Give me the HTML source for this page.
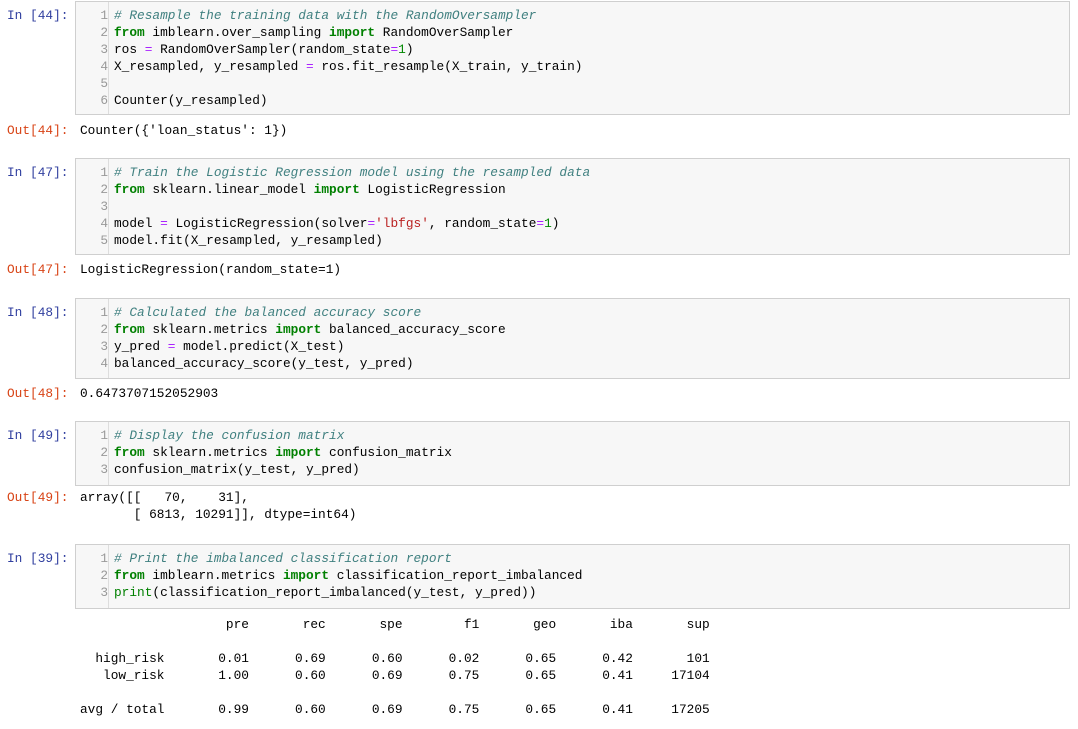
<!DOCTYPE html>
<html><head><meta charset="utf-8"><style>
body{margin:0;background:#fff;width:1078px;height:729px;position:relative;overflow:hidden;font-family:"Liberation Mono",monospace;font-size:12.8px;color:#000}
.p{position:absolute;left:7px;white-space:pre;line-height:17px}
.in{color:#303f9f}.out{color:#d84315}
.box{position:absolute;left:75px;width:993px;background:#f7f7f7;border:1px solid #cfcfcf}
.g{position:absolute;left:0;top:0;bottom:0;width:32px;border-right:1px solid #ddd;text-align:right;color:#999;padding-top:5px;line-height:17px;white-space:pre}
.c{position:absolute;left:38px;top:5px;line-height:17px;white-space:pre}
.o{position:absolute;left:80px;white-space:pre;line-height:17px}
.k{color:#008000;font-weight:bold}.cm{color:#408080;font-style:italic}.e{color:#aa22ff}.s{color:#ba2121}.n{color:#080}.b{color:#008000}
</style></head><body>

<div class="p in" style="top:7px">In [44]:</div>
<div class="box" style="top:1px;height:112px"><div class="g">1
2
3
4
5
6</div><div class="c"><span class="cm"># Resample the training data with the RandomOversampler</span>
<span class="k">from</span> imblearn.over_sampling <span class="k">import</span> RandomOverSampler
ros <span class="e">=</span> RandomOverSampler(random_state<span class="e">=</span><span class="n">1</span>)
X_resampled, y_resampled <span class="e">=</span> ros.fit_resample(X_train, y_train)

Counter(y_resampled)</div></div>
<div class="p out" style="top:122px">Out[44]:</div>
<div class="o" style="top:122px">Counter({'loan_status': 1})</div>

<div class="p in" style="top:164px">In [47]:</div>
<div class="box" style="top:158px;height:95px"><div class="g">1
2
3
4
5</div><div class="c"><span class="cm"># Train the Logistic Regression model using the resampled data</span>
<span class="k">from</span> sklearn.linear_model <span class="k">import</span> LogisticRegression

model <span class="e">=</span> LogisticRegression(solver<span class="e">=</span><span class="s">'lbfgs'</span>, random_state<span class="e">=</span><span class="n">1</span>)
model.fit(X_resampled, y_resampled)</div></div>
<div class="p out" style="top:261px">Out[47]:</div>
<div class="o" style="top:261px">LogisticRegression(random_state=1)</div>

<div class="p in" style="top:304px">In [48]:</div>
<div class="box" style="top:298px;height:79px"><div class="g">1
2
3
4</div><div class="c"><span class="cm"># Calculated the balanced accuracy score</span>
<span class="k">from</span> sklearn.metrics <span class="k">import</span> balanced_accuracy_score
y_pred <span class="e">=</span> model.predict(X_test)
balanced_accuracy_score(y_test, y_pred)</div></div>
<div class="p out" style="top:385px">Out[48]:</div>
<div class="o" style="top:385px">0.6473707152052903</div>

<div class="p in" style="top:427px">In [49]:</div>
<div class="box" style="top:421px;height:63px"><div class="g">1
2
3</div><div class="c"><span class="cm"># Display the confusion matrix</span>
<span class="k">from</span> sklearn.metrics <span class="k">import</span> confusion_matrix
confusion_matrix(y_test, y_pred)</div></div>
<div class="p out" style="top:489px">Out[49]:</div>
<div class="o" style="top:489px">array([[   70,    31],
       [ 6813, 10291]], dtype=int64)</div>

<div class="p in" style="top:550px">In [39]:</div>
<div class="box" style="top:544px;height:63px"><div class="g">1
2
3</div><div class="c"><span class="cm"># Print the imbalanced classification report</span>
<span class="k">from</span> imblearn.metrics <span class="k">import</span> classification_report_imbalanced
<span class="b">print</span>(classification_report_imbalanced(y_test, y_pred))</div></div>
<div class="o" style="top:616px">                   pre       rec       spe        f1       geo       iba       sup

  high_risk       0.01      0.69      0.60      0.02      0.65      0.42       101
   low_risk       1.00      0.60      0.69      0.75      0.65      0.41     17104

avg / total       0.99      0.60      0.69      0.75      0.65      0.41     17205</div>
</body></html>
